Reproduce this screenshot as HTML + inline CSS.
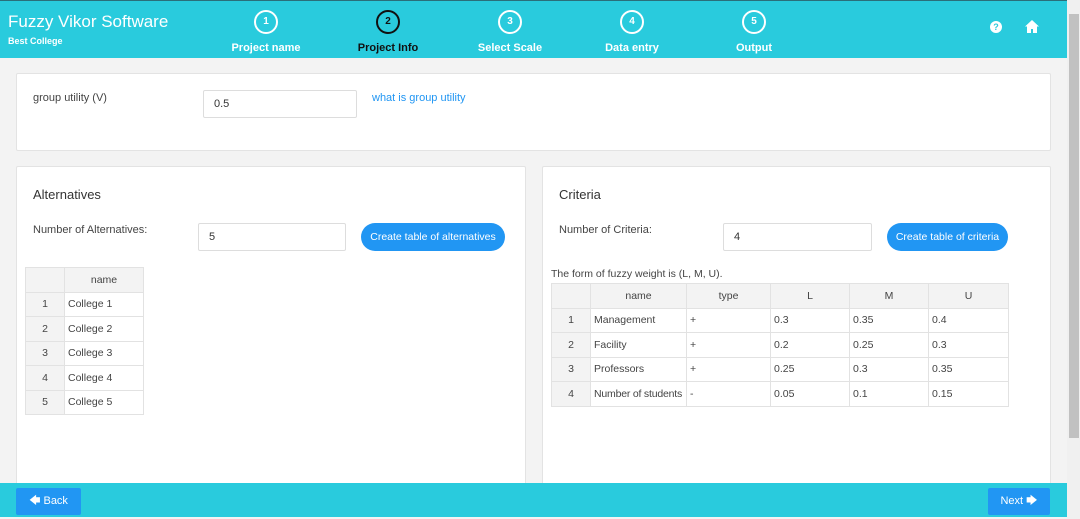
<!DOCTYPE html>
<html><head><meta charset="utf-8"><style>
*{box-sizing:border-box;margin:0;padding:0}
body{width:1080px;height:519px;overflow:hidden;background:#f3f3f3;font-family:"Liberation Sans",Arial,sans-serif;position:relative;color:#333}
.hdr{position:absolute;left:0;top:0;width:1067px;height:58px;background:#29cbdd;border-top:1px solid #2a6f7a}
.title{position:absolute;left:8px;top:11px;color:#fff;font-size:17px}
.sub{position:absolute;left:8px;top:35px;color:#fff;font-size:9px;font-weight:bold}
.step{position:absolute;top:9px;width:100px;margin-left:-50px;text-align:center;color:#fff;font-size:11px;font-weight:bold}
.step .c{width:24px;height:24px;border:2px solid #fff;border-radius:50%;margin:0 auto 8px;font-size:10px;line-height:20px}
.step.a{color:#111}.step.a .c{border-color:#111}
.panel{position:absolute;background:#fff;border:1px solid #e3e3e3;border-radius:2px}
.lbl{position:absolute;font-size:11px;color:#444}
.inp{position:absolute;height:28px;border:1px solid #ddd;border-radius:2px;font-size:11px;padding-left:10px;line-height:26px}
.btn{position:absolute;height:28px;background:#2196f3;color:#fff;border-radius:14px;font-size:10.5px;line-height:28px;text-align:center;white-space:nowrap}
h3{position:absolute;font-weight:normal;font-size:13px;color:#333}
table{position:absolute;border-collapse:collapse;font-size:10.5px;color:#444;table-layout:fixed}
td{border:1px solid #e2e2e2;height:24.5px;padding:0 3px;white-space:nowrap;overflow:hidden}
td.n{background:#f3f3f3;text-align:center}
tr.h td{background:#f3f3f3;text-align:center}
.ftr{position:absolute;left:0;top:483px;width:1067px;height:34px;background:#29cbdd}
.fb{position:absolute;top:5px;height:27px;background:#2196f3;color:#fff;font-size:11px;line-height:27px;text-align:center;border-radius:2px}
.sb{position:absolute;left:1067px;top:0;width:13px;height:519px;background:#f0f0f0}
.th{position:absolute;left:1069px;top:14px;width:10px;height:424px;background:#c1c1c1}
</style></head><body>
<div class="hdr">
<div class="title">Fuzzy Vikor Software</div>
<div class="sub">Best College</div>
<div class="step" style="left:266px"><div class="c">1</div>Project name</div>
<div class="step a" style="left:388px"><div class="c">2</div>Project Info</div>
<div class="step" style="left:510px"><div class="c">3</div>Select Scale</div>
<div class="step" style="left:632px"><div class="c">4</div>Data entry</div>
<div class="step" style="left:754px"><div class="c">5</div>Output</div>
<div style="position:absolute;left:990px;top:20px;width:12px;height:12px;border-radius:50%;background:#fff;color:#29cbdd;font-size:9px;font-weight:bold;text-align:center;line-height:12px">?</div>
<svg style="position:absolute;left:1025px;top:19px" width="14" height="13" viewBox="0 0 14 13"><path d="M7 0L0 6.5h2V13h4V9h2v4h4V6.5h2z" fill="#fff"/></svg>
</div>
<div class="panel" style="left:16px;top:73px;width:1035px;height:78px">
<div class="lbl" style="left:16px;top:18px">group utility (V)</div>
<div class="inp" style="left:186px;top:16px;width:154px">0.5</div>
<div class="lbl" style="left:355px;top:18px;color:#2196f3">what is group utility</div>
</div>
<div class="panel" style="left:16px;top:166px;width:510px;height:330px">
<h3 style="left:16px;top:20px">Alternatives</h3>
<div class="lbl" style="left:16px;top:57px">Number of Alternatives:</div>
<div class="inp" style="left:181px;top:56px;width:148px">5</div>
<div class="btn" style="left:344px;top:56px;width:144px">Create table of alternatives</div>
<table style="left:8px;top:100px;width:119px">
<tr class="h"><td style="width:39px"></td><td>name</td></tr>
<tr><td class="n">1</td><td>College 1</td></tr>
<tr><td class="n">2</td><td>College 2</td></tr>
<tr><td class="n">3</td><td>College 3</td></tr>
<tr><td class="n">4</td><td>College 4</td></tr>
<tr><td class="n">5</td><td>College 5</td></tr>
</table>
</div>
<div class="panel" style="left:542px;top:166px;width:509px;height:330px">
<h3 style="left:16px;top:20px">Criteria</h3>
<div class="lbl" style="left:16px;top:57px">Number of Criteria:</div>
<div class="inp" style="left:180px;top:56px;width:149px">4</div>
<div class="btn" style="left:344px;top:56px;width:121px">Create table of criteria</div>
<div class="lbl" style="left:8px;top:101px;font-size:10.5px">The form of fuzzy weight is (L, M, U).</div>
<table style="left:8px;top:116px;width:457px">
<tr class="h"><td style="width:39px"></td><td style="width:96px">name</td><td style="width:84px">type</td><td style="width:79px">L</td><td style="width:79px">M</td><td style="width:80px">U</td></tr>
<tr><td class="n">1</td><td>Management</td><td>+</td><td>0.3</td><td>0.35</td><td>0.4</td></tr>
<tr><td class="n">2</td><td>Facility</td><td>+</td><td>0.2</td><td>0.25</td><td>0.3</td></tr>
<tr><td class="n">3</td><td>Professors</td><td>+</td><td>0.25</td><td>0.3</td><td>0.35</td></tr>
<tr><td class="n">4</td><td style="letter-spacing:-0.2px">Number of students</td><td>-</td><td>0.05</td><td>0.1</td><td>0.15</td></tr>
</table>
</div>
<div class="ftr">
<div class="fb" style="left:16px;width:65px">&#x1F844; Back</div>
<div class="fb" style="left:988px;width:62px">Next &#x1F846;</div>
</div>
<div class="sb"></div><div class="th"></div>
</body></html>
